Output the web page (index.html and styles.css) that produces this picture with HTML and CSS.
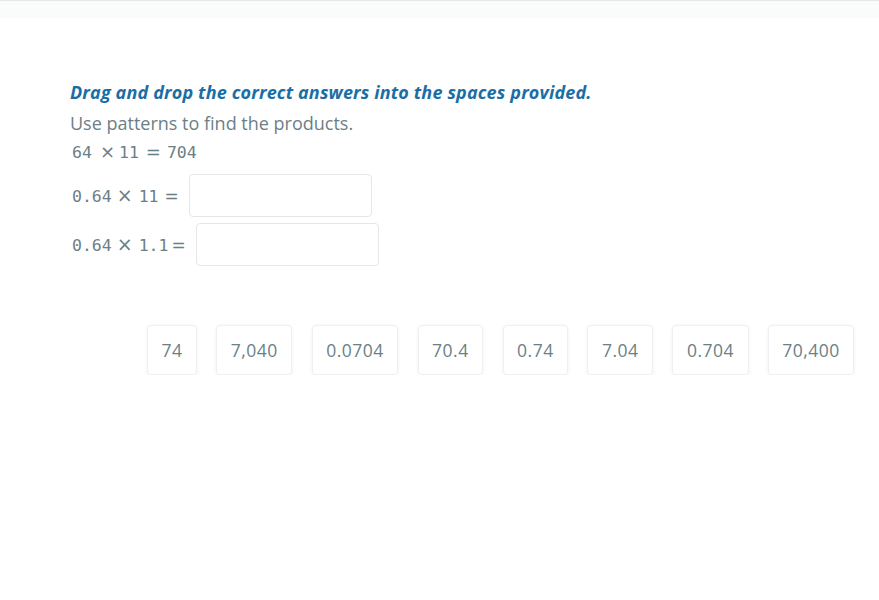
FILE: index.html
```html
<!DOCTYPE html>
<html>
<head>
<meta charset="utf-8">
<link rel="stylesheet" href="styles.css">
</head>
<body>
<div class="topbar"></div>
<main class="content">
  <h1 class="title">Drag and drop the correct answers into the spaces provided.</h1>
  <p class="intro">Use patterns to find the products.</p>
  <div class="math given">64<span class="op times-given">×</span>11<span class="op eq-given">=</span>704</div>
  <div class="row row-first">
    <span class="math">0.64<span class="op times">×</span>11<span class="op eq eq-wide">=</span></span>
    <div class="drop"></div>
  </div>
  <div class="row row-second">
    <span class="math">0.64<span class="op times">×</span>1.1<span class="op eq">=</span></span>
    <div class="drop"></div>
  </div>
  <div class="tiles">
    <div class="tile">74</div>
    <div class="tile">7,040</div>
    <div class="tile">0.0704</div>
    <div class="tile">70.4</div>
    <div class="tile">0.74</div>
    <div class="tile">7.04</div>
    <div class="tile">0.704</div>
    <div class="tile">70,400</div>
  </div>
</main>
</body>
</html>
```
FILE: styles.css
```css
html, body {
  margin: 0;
  padding: 0;
  background: #ffffff;
}
body {
  font-family: "Open Sans", "Noto Sans", sans-serif;
  color: #6b7f87;
}
.topbar {
  height: 17px;
  border-top: 1px solid #e4e8e9;
  background: #fafcfc;
}
.content {
  padding: 62px 0 0 70px;
}
.title {
  margin: 0;
  font-size: 18px;
  line-height: 24px;
  font-weight: 700;
  font-style: italic;
  color: #1b6ea5;
  letter-spacing: 0.15px;
}
.intro {
  margin: 6px 0 0;
  font-size: 18px;
  line-height: 26px;
  color: #6b7f87;
}
.math {
  font-family: "DejaVu Sans Mono", monospace;
  font-size: 16.5px;
  color: #6b7f87;
  white-space: pre;
}
.op {
  font-family: "DejaVu Sans", sans-serif;
  display: inline-block;
  line-height: 1;
}
.times-given {
  font-size: 18px;
  margin: 0 4px 0 8px;
}
.eq-given {
  font-size: 18px;
  margin: 0 6px 0 7px;
}
.times {
  font-size: 19px;
  margin: 0 6px 0 5px;
}
.eq {
  font-size: 17px;
  margin-left: 3px;
}
.eq-wide {
  margin-left: 6px;
}
.given {
  margin-top: 4px;
  line-height: 26px;
  padding-left: 2px;
}
.row {
  display: flex;
  align-items: center;
  gap: 10px;
  padding-left: 2px;
}
.row-first {
  margin-top: 8px;
}
.row-second {
  margin-top: 6px;
}
.drop {
  width: 181px;
  height: 41px;
  border: 1px solid #e3e7e9;
  border-radius: 4px;
  background: #fff;
}
.tiles {
  display: flex;
  gap: 19.3px;
  margin-top: 59px;
  padding-left: 77px;
}
.tile {
  height: 50px;
  box-sizing: border-box;
  padding: 0 13.5px;
  display: flex;
  align-items: center;
  font-size: 17.5px;
  letter-spacing: 0.5px;
  color: #6b7f87;
  background: #fff;
  border: 1px solid #eef0f1;
  border-radius: 4px;
  box-shadow: 0 1px 4px rgba(0, 0, 0, 0.06);
}
```
